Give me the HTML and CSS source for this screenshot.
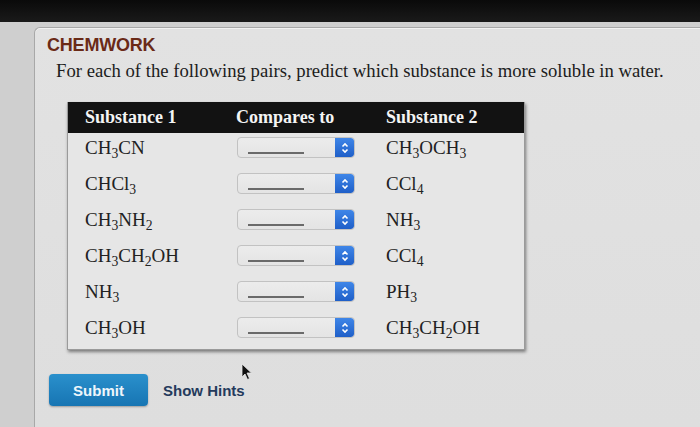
FILE: index.html
```html
<!DOCTYPE html>
<html>
<head>
<meta charset="utf-8">
<link rel="stylesheet" href="styles.css">
</head>
<body>
<div class="topbar"></div>
<div class="stage">
  <div class="panel">
    <h1 class="brand">CHEMWORK</h1>
    <p class="prompt">For each of the following pairs, predict which substance is more soluble in water.</p>
    <div class="table">
      <div class="row head">
        <div class="c1">Substance 1</div>
        <div class="c2">Compares to</div>
        <div class="c3">Substance 2</div>
      </div>
      <div class="row">
        <div class="c1">CH<sub>3</sub>CN</div>
        <div class="c2"><div class="select"><span class="blank"></span><span class="arrow"><svg viewBox="0 0 10 12" width="10" height="12"><path d="M2.5 4.5 L5 2 L7.5 4.5 M2.5 7.5 L5 10 L7.5 7.5" fill="none" stroke="#fff" stroke-width="1.6"/></svg></span></div></div>
        <div class="c3">CH<sub>3</sub>OCH<sub>3</sub></div>
      </div>
      <div class="row">
        <div class="c1">CHCl<sub>3</sub></div>
        <div class="c2"><div class="select"><span class="blank"></span><span class="arrow"><svg viewBox="0 0 10 12" width="10" height="12"><path d="M2.5 4.5 L5 2 L7.5 4.5 M2.5 7.5 L5 10 L7.5 7.5" fill="none" stroke="#fff" stroke-width="1.6"/></svg></span></div></div>
        <div class="c3">CCl<sub>4</sub></div>
      </div>
      <div class="row">
        <div class="c1">CH<sub>3</sub>NH<sub>2</sub></div>
        <div class="c2"><div class="select"><span class="blank"></span><span class="arrow"><svg viewBox="0 0 10 12" width="10" height="12"><path d="M2.5 4.5 L5 2 L7.5 4.5 M2.5 7.5 L5 10 L7.5 7.5" fill="none" stroke="#fff" stroke-width="1.6"/></svg></span></div></div>
        <div class="c3">NH<sub>3</sub></div>
      </div>
      <div class="row">
        <div class="c1">CH<sub>3</sub>CH<sub>2</sub>OH</div>
        <div class="c2"><div class="select"><span class="blank"></span><span class="arrow"><svg viewBox="0 0 10 12" width="10" height="12"><path d="M2.5 4.5 L5 2 L7.5 4.5 M2.5 7.5 L5 10 L7.5 7.5" fill="none" stroke="#fff" stroke-width="1.6"/></svg></span></div></div>
        <div class="c3">CCl<sub>4</sub></div>
      </div>
      <div class="row">
        <div class="c1">NH<sub>3</sub></div>
        <div class="c2"><div class="select"><span class="blank"></span><span class="arrow"><svg viewBox="0 0 10 12" width="10" height="12"><path d="M2.5 4.5 L5 2 L7.5 4.5 M2.5 7.5 L5 10 L7.5 7.5" fill="none" stroke="#fff" stroke-width="1.6"/></svg></span></div></div>
        <div class="c3">PH<sub>3</sub></div>
      </div>
      <div class="row">
        <div class="c1">CH<sub>3</sub>OH</div>
        <div class="c2"><div class="select"><span class="blank"></span><span class="arrow"><svg viewBox="0 0 10 12" width="10" height="12"><path d="M2.5 4.5 L5 2 L7.5 4.5 M2.5 7.5 L5 10 L7.5 7.5" fill="none" stroke="#fff" stroke-width="1.6"/></svg></span></div></div>
        <div class="c3">CH<sub>3</sub>CH<sub>2</sub>OH</div>
      </div>
    </div>
    <div class="actions">
      <button class="submit">Submit</button>
      <span class="hints">Show Hints</span>
    </div>
    <svg class="cursor" viewBox="0 0 12 18" width="12" height="18"><path d="M1 1 L1 14 L4 11 L6.5 16.5 L8.5 15.5 L6 10 L10.5 10 Z" fill="#111" stroke="#e8e8e8" stroke-width="0.8"/></svg>
  </div>
</div>
</body>
</html>
```
FILE: styles.css
```css
html, body {
  margin: 0;
  padding: 0;
}
body {
  width: 700px;
  height: 427px;
  overflow: hidden;
  background: #cfcfcf;
  font-family: "Liberation Serif", "Times New Roman", serif;
}
.topbar {
  height: 22px;
  background: linear-gradient(#0a0a0a, #1a1a1a);
}
.stage {
  padding: 5px 0 0 34px;
}
.panel {
  position: relative;
  background: linear-gradient(180deg, #e2e2e2, #dedede);
  border: 1px solid #a8a8a8;
  border-right: none;
  border-bottom: none;
  border-radius: 6px 0 0 0;
  height: 400px;
  box-sizing: border-box;
  padding: 6px 0 0 12px;
  box-shadow: inset 0 1px 0 #f2f2f2;
}
.brand {
  margin: 0;
  font-family: "Liberation Sans", Arial, sans-serif;
  font-weight: bold;
  font-size: 18px;
  line-height: 22px;
  color: #6a2a17;
  letter-spacing: -0.2px;
}
.prompt {
  margin: 4px 0 0 9px;
  font-size: 18.7px;
  line-height: 22px;
  color: #1c1c1c;
}
.table {
  margin: 20px 0 0 20px;
  width: 456px;
  background: #e6e6e6;
  box-shadow: 1px 2px 3px rgba(0,0,0,0.45);
  border: 1px solid #9a9a9a;
  border-top: none;
}
.row {
  display: grid;
  grid-template-columns: 168px 150px 1fr;
  height: 36px;
  box-sizing: border-box;
  padding-bottom: 7px;
  align-items: center;
  font-size: 19px;
  color: #222;
}
.row .c1 {
  padding-left: 17px;
}
.row .c2 {
  padding-left: 1px;
}
.row.head {
  height: 31px;
  padding-bottom: 0;
  background: #121212;
  color: #f4f4f4;
  font-weight: bold;
  font-size: 18px;
}
.row.head .c2 {
  padding-left: 0;
}
sub {
  font-size: 0.72em;
  vertical-align: -0.3em;
  line-height: 0;
}
.select {
  width: 118px;
  height: 21px;
  box-sizing: border-box;
  border: 1px solid #c2c2c2;
  border-radius: 4px;
  background: linear-gradient(#ececec, #e4e4e4);
  display: flex;
  align-items: flex-end;
  justify-content: space-between;
  overflow: hidden;
}
.blank {
  display: block;
  width: 56px;
  height: 2px;
  background: #6a6a6a;
  margin: 0 0 3px 10px;
}
.arrow {
  width: 19px;
  height: 19px;
  background: linear-gradient(#3f86e8, #1f5fc8);
  display: flex;
  align-items: center;
  justify-content: center;
  border-radius: 0 3px 3px 0;
}
.actions {
  display: flex;
  align-items: center;
  gap: 15px;
  margin: 24px 0 0 2px;
}
.submit {
  width: 99px;
  height: 32px;
  border: none;
  border-radius: 4px;
  background: linear-gradient(#2a90cc, #1775b3);
  color: #eef6fb;
  font-family: "Liberation Sans", Arial, sans-serif;
  font-weight: bold;
  font-size: 15px;
  box-shadow: 0 1px 2px rgba(0,0,0,0.3);
}
.hints {
  font-family: "Liberation Sans", Arial, sans-serif;
  font-weight: bold;
  font-size: 15px;
  color: #243a5c;
}
.cursor {
  position: absolute;
  left: 206px;
  top: 335px;
}
```
